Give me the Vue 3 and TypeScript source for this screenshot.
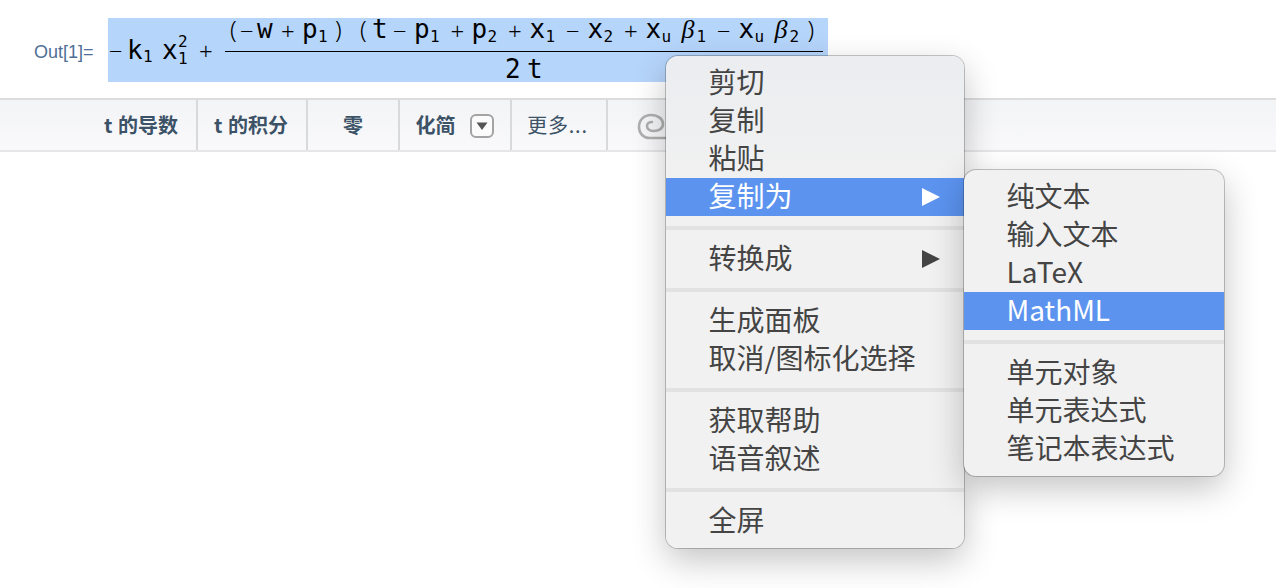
<script setup lang="ts">
type Tok = { t: string; k: string; w: number };
const L = (t: string, w = 15): Tok => ({ t, k: 'letter', w });
const O = (t: string, w = 21.5): Tok => ({ t, k: 'op', w });
const S = (t: string, w = 21.5): Tok => ({ t, k: 'sub', w });
const G = (t: string): Tok => ({ t, k: 'greek', w: 15 });
const P = (t: string, w: number): Tok => ({ t, k: 'paren', w });
const numerator: Tok[] = [
  P('(', 11), O('−', 17), L('w', 24), O('+', 21), L('p'), S('1', 17), P(')', 25), P('(', 13),
  L('t', 21), O('−', 21), L('p'), S('1'), O('+', 21), L('p'), S('2'), O('+'),
  L('x'), S('1'), O('−'), L('x'), S('2'), O('+'), L('x'), S('u', 20),
  G('β'), S('1'), O('−'), L('x'), S('u', 20), G('β'), S('2', 18), P(')', 8)
];
const tokWidth = (n: Tok) => ({ width: `${n.w}px` });
const toolbar = [
  { label: 't 的导数', cls: 'b1' },
  { label: 't 的积分', cls: 'b2' },
  { label: '零', cls: 'b3' },
  { label: '化简', cls: 'b4', drop: true },
  { label: '更多...', cls: 'b5', light: true }
];
type Entry = { label?: string; sep?: boolean; active?: boolean; arrow?: boolean };
const mainMenu: Entry[] = [
  { label: '剪切' }, { label: '复制' }, { label: '粘贴' },
  { label: '复制为', active: true, arrow: true }, { sep: true },
  { label: '转换成', arrow: true }, { sep: true },
  { label: '生成面板' }, { label: '取消/图标化选择' }, { sep: true },
  { label: '获取帮助' }, { label: '语音叙述' }, { sep: true },
  { label: '全屏' }
];
const subMenu: Entry[] = [
  { label: '纯文本' }, { label: '输入文本' }, { label: 'LaTeX' },
  { label: 'MathML', active: true }, { sep: true },
  { label: '单元对象' }, { label: '单元表达式' }, { label: '笔记本表达式' }
];
</script>

<template>
  <div class="page">
    <section class="output">
      <span class="out-label">Out[1]=</span>
      <div class="math">
        <span class="m-op m-minus">−</span>
        <span class="m-letter">k</span><span class="m-sub">1</span>
        <span class="m-letter">x</span>
        <span class="stack"><span>2</span><span>1</span></span>
        <span class="m-op m-plus">+</span>
        <div class="frac">
          <div class="num">
            <span v-for="(n, i) in numerator" :key="i" class="tok" :class="n.k" :style="tokWidth(n)">{{ n.t }}</span>
          </div>
          <div class="den"><span class="den-two">2</span><span>t</span></div>
        </div>
      </div>
    </section>

    <nav class="toolbar">
      <div v-for="b in toolbar" :key="b.label" class="tb-btn" :class="[b.cls, { light: b.light }]">
        <span>{{ b.label }}</span>
        <svg v-if="b.drop" class="drop" width="24" height="24" viewBox="0 0 24 24">
          <rect x="1" y="1" width="22" height="22" rx="5" fill="#fbfbfc" stroke="#a3a3a3" stroke-width="2" />
          <path d="M6.5 8.5h11L12 16z" fill="#555" />
        </svg>
      </div>
      <svg class="spiral" width="30" height="28" viewBox="0 0 30 28" fill="none" stroke="#afafaf" stroke-width="2.6" stroke-linecap="round">
        <path d="M30 26H14C7 26 3 21 3 15C3 8 8 3 15 3C22 3 27 7 27 12C27 17 22 19 18 19C14 19 11 17 11 14C11 11 14 10 16 10" />
      </svg>
    </nav>

    <div class="menu main-menu">
      <template v-for="(m, i) in mainMenu" :key="i">
        <div v-if="m.sep" class="sep"><i></i></div>
        <div v-else class="item" :class="{ active: m.active }">
          <span class="label">{{ m.label }}</span>
          <span v-if="m.arrow" class="arrow"></span>
        </div>
      </template>
    </div>

    <div class="menu sub-menu">
      <template v-for="(m, i) in subMenu" :key="i">
        <div v-if="m.sep" class="sep"><i></i></div>
        <div v-else class="item" :class="{ active: m.active }">
          <span class="label">{{ m.label }}</span>
        </div>
      </template>
    </div>
  </div>
</template>

<style>
html, body { margin: 0; background: #fff; }
</style>

<style scoped>
.page {
  position: relative;
  width: 1276px;
  height: 588px;
  overflow: hidden;
  background: #fff;
  font-family: "Noto Sans CJK SC", "Liberation Sans", sans-serif;
}
.output {
  box-sizing: border-box;
  height: 98px;
  padding: 18px 0 0 34px;
  display: flex;
  align-items: flex-start;
}
.out-label {
  width: 74px;
  margin-top: 23px;
  font: 18px/22px "Liberation Sans", sans-serif;
  color: #4f7096;
}
.math {
  box-sizing: border-box;
  width: 720px;
  height: 64px;
  background: #b6d5fb;
  display: flex;
  align-items: flex-start;
  padding-left: 2px;
  color: #000;
  font-family: "DejaVu Sans Mono", monospace;
  font-size: 26px;
}
.m-letter { width: 15px; line-height: 30px; margin-top: 17px; margin-left: -1px; margin-right: 1px; }
.m-sub { width: 20px; font-size: 16px; line-height: 20px; margin-top: 29px; }
.m-op {
  font-family: "Noto Sans", sans-serif;
  font-weight: 300;
  font-size: 24px;
  line-height: 24px;
  margin-top: 21px;
}
.m-minus { width: 18px; margin-left: -1px; margin-right: 1px; }
.m-plus { width: 25px; margin-left: -1px; margin-right: 1px; }
.stack {
  width: 22px;
  display: flex;
  flex-direction: column;
  font-size: 16px;
  line-height: 17px;
  margin-top: 15px;
}
.frac { width: 598px; display: flex; flex-direction: column; }
.num {
  height: 33px;
  padding-left: 5px;
  border-bottom: 1px solid #000;
  display: flex;
  align-items: flex-start;
}
.tok { flex: none; display: block; line-height: 24px; }
.tok.letter { margin: -1px 1px 0 -1px; }
.tok.op {
  font-family: "Noto Sans", sans-serif;
  font-weight: 300;
  font-size: 24px;
  margin: 1px 1px 0 -1px;
}
.tok.sub { font-size: 16px; line-height: 20px; margin-top: 9px; }
.tok.paren {
  font-family: "Noto Sans", sans-serif;
  font-weight: 300;
  font-size: 24px;
  margin-top: -1px;
}
.tok.greek {
  font-family: "Liberation Serif", serif;
  font-style: italic;
  font-size: 26px;
}
.den { display: flex; padding-left: 280px; margin-top: 2px; line-height: 30px; }
.den-two { width: 22px; }
.toolbar {
  box-sizing: border-box;
  height: 54px;
  padding-left: 87px;
  display: flex;
  align-items: stretch;
  border-top: 2px solid #dcdcdc;
  border-bottom: 2px solid #e6e6e6;
  background: linear-gradient(#f3f4f6, #f9f9fb);
}
.tb-btn {
  box-sizing: border-box;
  display: flex;
  align-items: center;
  justify-content: center;
  gap: 14px;
  border-right: 2px solid #d8d9da;
  color: #3c5267;
  font-size: 20px;
  font-weight: 700;
  word-spacing: 1px;
  white-space: nowrap;
  padding-bottom: 2px;
}
.tb-btn.light { font-weight: 400; letter-spacing: 0.8px; }
.b1 { width: 111px; justify-content: flex-end; padding-right: 18px; }
.b2 { width: 110px; padding-right: 2px; }
.b3 { width: 92px; }
.b4 { width: 112px; padding-right: 1px; }
.b5 { width: 96px; padding-right: 3px; }
.drop { flex: none; margin-top: 4px; }
.spiral { margin: 12px 0 0 28px; }
.menu {
  position: absolute;
  box-sizing: border-box;
  padding: 8px 0;
  border-radius: 12px;
  background: linear-gradient(#ebedf0, #f1f1f1 130px);
  box-shadow: 0 0 0 1px rgba(0, 0, 0, 0.22), 0 12px 34px rgba(0, 0, 0, 0.24);
  color: #444;
  font-size: 28px;
}
.main-menu { left: 666px; top: 56px; width: 298px; height: 492px; }
.sub-menu { left: 964px; top: 170px; width: 260px; height: 306px; background: #f1f1f1; }
.item {
  height: 38px;
  line-height: 38px;
  padding-left: 42.5px;
  display: flex;
  justify-content: space-between;
  align-items: center;
  white-space: nowrap;
}
.label { margin-bottom: 4px; }
.active { background: #5b93ef; color: #fff; }
.sep { height: 24px; display: flex; align-items: center; }
.sep i { display: block; width: 100%; height: 4px; background: #e2e2e2; }
.arrow {
  width: 0;
  height: 0;
  margin-right: 24px;
  border-left: 18px solid #444;
  border-top: 9.5px solid transparent;
  border-bottom: 9.5px solid transparent;
}
.active .arrow { border-left-color: #fff; }
</style>
